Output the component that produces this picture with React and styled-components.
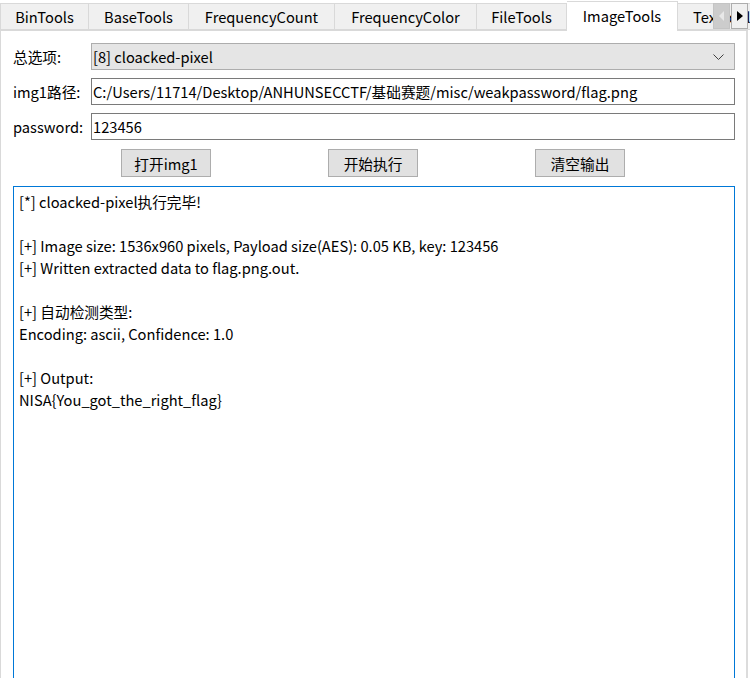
import React from 'react';
import styled, { createGlobalStyle } from 'styled-components';

const GlobalStyle = createGlobalStyle`
  html, body {
    margin: 0;
    padding: 0;
    background: #ffffff;
  }
  body {
    font-family: "Noto Sans CJK SC", "Noto Sans", sans-serif;
    font-size: 11pt;
    color: #000;
  }
`;

const Window = styled.div`
  width: 750px;
  height: 678px;
  overflow: hidden;
  background: #ffffff;
  display: flex;
  flex-direction: column;
`;

const TabStrip = styled.div`
  height: 30px;
  display: flex;
  align-items: flex-end;
  position: relative;
  flex-shrink: 0;
`;

const Tab = styled.div`
  box-sizing: border-box;
  height: ${p => (p.$active ? '30px' : '27px')};
  width: ${p => p.$w}px;
  flex-shrink: 0;
  border: 1px solid #d9d9d9;
  border-bottom: ${p => (p.$active ? 'none' : '1px solid #d9d9d9')};
  border-left: ${p => (p.$first ? '1px solid #d9d9d9' : 'none')};
  background: ${p => (p.$active ? '#ffffff' : '#f0f0f0')};
  display: flex;
  align-items: center;
  justify-content: ${p => (p.$clip ? 'flex-start' : 'center')};
  padding-left: ${p => (p.$clip ? '15px' : '0')};
  padding-bottom: ${p => (p.$active ? '3px' : '0')};
  font-size: 11pt;
  white-space: nowrap;
  overflow: hidden;
  margin-bottom: ${p => (p.$active ? '-1px' : '0')};
  z-index: ${p => (p.$active ? 2 : 1)};
`;

const Scroller = styled.div`
  position: absolute;
  right: 2px;
  top: 3px;
  display: flex;
  gap: 1px;
  z-index: 3;
`;

const ScrollButton = styled.div`
  box-sizing: border-box;
  width: 17px;
  height: 26px;
  border: 1px solid ${p => (p.$disabled ? '#c4c4c4' : '#adadad')};
  background: ${p => (p.$disabled ? '#cccccc' : '#f0f0f0')};
  display: flex;
  align-items: center;
  justify-content: center;
`;

const Panel = styled.div`
  flex: 1;
  box-sizing: border-box;
  width: 748px;
  border-left: 1px solid #d9d9d9;
  border-right: 2px solid #dcdcdc;
  border-top: 1px solid #d9d9d9;
  padding: 12px 11px 0 12px;
  display: flex;
  flex-direction: column;
`;

const FormRow = styled.div`
  display: grid;
  grid-template-columns: 78px 644px;
  align-items: center;
  margin-bottom: 8px;
`;

const Label = styled.div`
  font-size: 11pt;
  line-height: 20px;
`;

const Field = styled.div`
  box-sizing: border-box;
  height: 27px;
  border: 1px solid ${p => (p.$combo ? '#adadad' : '#7a7a7a')};
  background: ${p => (p.$combo ? '#e5e5e5' : '#ffffff')};
  display: flex;
  align-items: center;
  justify-content: space-between;
  padding: 0 10px 0 1px;
  font-size: 11pt;
  white-space: nowrap;
`;

const ButtonRow = styled.div`
  display: flex;
  justify-content: center;
  gap: 117px;
  padding-right: 2px;
  margin-top: 1px;
  margin-bottom: 9px;
`;

const Button = styled.div`
  box-sizing: border-box;
  width: 90px;
  height: 28px;
  border: 1px solid #adadad;
  background: #e1e1e1;
  display: flex;
  align-items: center;
  justify-content: center;
  font-size: 11pt;
`;

const Output = styled.div`
  box-sizing: border-box;
  width: 722px;
  height: 520px;
  flex-shrink: 0;
  border: 1px solid #0078d7;
  padding: 4px 5px;
  font-size: 11pt;
  line-height: 22px;
  white-space: pre-wrap;
  color: #000;
`;

const tabs = [
  { name: 'BinTools', w: 89 },
  { name: 'BaseTools', w: 100 },
  { name: 'FrequencyCount', w: 146 },
  { name: 'FrequencyColor', w: 142 },
  { name: 'FileTools', w: 90 },
  { name: 'ImageTools', w: 111, active: true },
  { name: 'TextTools', w: 80, clip: true },
];

const output = `[*] cloacked-pixel执行完毕!

[+] Image size: 1536x960 pixels, Payload size(AES): 0.05 KB, key: 123456
[+] Written extracted data to flag.png.out.

[+] 自动检测类型:
Encoding: ascii, Confidence: 1.0

[+] Output:
NISA{You_got_the_right_flag}`;

function Chevron() {
  return (
    <svg width="11" height="6" viewBox="0 0 11 6">
      <path d="M0.5 0.5 L5.5 5.5 L10.5 0.5" fill="none" stroke="#404040" strokeWidth="1" />
    </svg>
  );
}

export default function App() {
  return (
    <>
      <GlobalStyle />
      <Window>
        <TabStrip>
          {tabs.map((t, i) => (
            <Tab key={t.name} $w={t.w} $active={t.active} $clip={t.clip} $first={i === 0}>
              {t.name}
            </Tab>
          ))}
          <Scroller>
            <ScrollButton $disabled>
              <svg width="6" height="10" viewBox="0 0 6 10">
                <path d="M5 0 L0 5 L5 10 Z" fill="#e8e8e8" />
              </svg>
            </ScrollButton>
            <ScrollButton>
              <svg width="6" height="10" viewBox="0 0 6 10">
                <path d="M0 0 L6 5 L0 10 Z" fill="#000" />
              </svg>
            </ScrollButton>
          </Scroller>
        </TabStrip>
        <Panel>
          <FormRow>
            <Label>总选项:</Label>
            <Field $combo>
              <span>[8] cloacked-pixel</span>
              <Chevron />
            </Field>
          </FormRow>
          <FormRow>
            <Label>img1路径:</Label>
            <Field>C:/Users/11714/Desktop/ANHUNSECCTF/基础赛题/misc/weakpassword/flag.png</Field>
          </FormRow>
          <FormRow>
            <Label>password:</Label>
            <Field>123456</Field>
          </FormRow>
          <ButtonRow>
            <Button>打开img1</Button>
            <Button>开始执行</Button>
            <Button>清空输出</Button>
          </ButtonRow>
          <Output>{output}</Output>
        </Panel>
      </Window>
    </>
  );
}
